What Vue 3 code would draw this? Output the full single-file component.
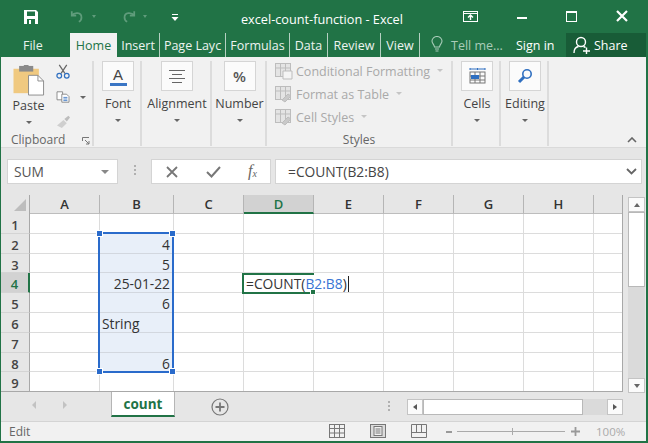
<script setup>
const tabs = [
  { label: 'Insert', width: 43 },
  { label: 'Page Layc', width: 66 },
  { label: 'Formulas', width: 64 },
  { label: 'Data', width: 38 },
  { label: 'Review', width: 53 },
  { label: 'View', width: 39 }
]
const columns = ['A', 'B', 'C', 'D', 'E', 'F', 'G', 'H', '']
const rows = [1, 2, 3, 4, 5, 6, 7, 8, 9]

// values in column B, by row number
const columnB = {
  2: '4',
  3: '5',
  4: '25-01-22',
  5: '6',
  6: 'String',
  8: '6'
}
const styleLinks = [
  { label: 'Conditional Formatting', icon: 'cond' },
  { label: 'Format as Table', icon: 'table' },
  { label: 'Cell Styles', icon: 'cell' }
]
</script>

<template>
  <div class="window">
    <header class="titlebar">
      <div class="quick">
        <svg class="save" width="16" height="16" viewBox="0 0 16 16">
          <path d="M1 1h12l2 2v12H1z" fill="#fff" />
          <rect x="4" y="2.5" width="8" height="4.5" fill="#217346" />
          <rect x="4" y="10" width="8" height="5" fill="#217346" />
          <rect x="6" y="11" width="2" height="4" fill="#fff" />
        </svg>
        <svg class="undo" width="15" height="13" viewBox="0 0 17 14" fill="none" stroke="#5f9c7b" stroke-width="2">
          <path d="M2 1v5h5M2 6c3-4 11-4 11 2 0 2-1 4-3 5" />
        </svg>
        <span class="mini-caret caret-undo"></span>
        <svg class="redo" width="15" height="13" viewBox="0 0 17 14" fill="none" stroke="#5f9c7b" stroke-width="2">
          <path d="M15 1v5h-5M15 6c-3-4-11-4-11 2 0 2 1 4 3 5" />
        </svg>
        <span class="mini-caret caret-redo"></span>
        <svg class="custom" width="8" height="8" viewBox="0 0 8 8">
          <path d="M1 1h6v1H1zM0.5 4h7L4 8z" fill="#fff" />
        </svg>
      </div>
      <div class="doc-title">excel-count-function - Excel</div>
      <div class="controls">
        <svg width="15" height="11" viewBox="0 0 15 11" fill="none" stroke="#fff">
          <rect x="0.5" y="0.5" width="14" height="10" />
          <path d="M0.5 2.5h14" />
          <path d="M7.5 9V4.5M5 6.5l2.5-2.5L10 6.5" stroke-width="1.4" />
        </svg>
        <span class="minimize"></span>
        <span class="maximize"></span>
        <svg width="12" height="12" viewBox="0 0 12 12" stroke="#fff" stroke-width="2.2">
          <path d="M1 1l10 10M11 1L1 11" />
        </svg>
      </div>
    </header>

    <nav class="tabbar">
      <span class="file-tab">File</span>
      <span class="home-tab">Home</span>
      <span v-for="tab in tabs" :key="tab.label" class="tab" :style="{ width: tab.width + 'px' }">{{ tab.label }}</span>
      <svg class="bulb" width="12" height="17" viewBox="0 0 12 17" fill="none" stroke="#a9ccb9" stroke-width="1.1">
        <path d="M3.5 11C3 8 1 7.500 1 5a5 4.500 0 0 1 10 0c0 2.500-2 3-2.500 6zM4 13h4M4.500 15h3" />
      </svg>
      <span class="tell">Tell me...</span>
      <span class="signin">Sign in</span>
      <span class="share">
        <svg width="18" height="18" viewBox="0 0 18 18" fill="none" stroke="#fff" stroke-width="1.4">
          <circle cx="8" cy="6" r="4.500" />
          <path d="M1 17c0-4 2-6 4.500-6.500M10.500 10.500c1 .3 1.500.6 2 1M10 15h7M13.500 11.500v7" />
        </svg>
        Share
      </span>
    </nav>

    <section class="ribbon">
      <div class="group clipboard">
        <div class="clip-main">
          <svg width="32" height="31" viewBox="0 0 33 33">
            <rect x="0" y="4" width="27" height="26" fill="#f0c980" />
            <rect x="6" y="1" width="15" height="6" fill="#8a8a8a" />
            <rect x="11" y="0" width="5" height="3" fill="#8a8a8a" />
            <path d="M16 11h10l6 6v15H16z" fill="#fff" stroke="#8a8a8a" />
            <path d="M26 11v6h6" fill="none" stroke="#8a8a8a" />
          </svg>
          <span class="label">Paste</span>
          <i class="caret"></i>
        </div>
        <div class="clip-tools">
          <svg width="16" height="15" viewBox="0 0 16 16" fill="none">
            <path d="M4 1l6 9M12 1l-6 9" stroke="#666" stroke-width="1.300" />
            <circle cx="4" cy="12.500" r="2.500" stroke="#2f6fc0" stroke-width="1.300" />
            <circle cx="12" cy="12.500" r="2.500" stroke="#2f6fc0" stroke-width="1.300" />
          </svg>
          <div class="copy-row">
            <svg width="16" height="12" viewBox="0 0 17 15" fill="#fff" stroke="#777">
              <path d="M1 1h7v10H1z" />
              <path d="M7 4h6l3 3v7H7z" />
              <path d="M9 8h5M9 10h5M9 12h5" stroke="#2f6fc0" />
            </svg>
            <i class="caret"></i>
          </div>
          <svg width="17" height="13" viewBox="0 0 18 16">
            <path d="M1 13l8-7 4 4-6 6z" fill="#cfcfcf" />
            <path d="M10 5l5-4 2 2-4 5z" fill="#bdbdbd" />
          </svg>
        </div>
        <div class="group-name clip-name">
          Clipboard
          <svg class="launcher" width="8" height="8" viewBox="0 0 8 8" fill="none" stroke="#777">
            <path d="M.5 4V.5H7M3 3l4 4M7 4v3H4" />
          </svg>
        </div>
      </div>

      <div class="group collapsed font">
        <div class="big-btn">
          <span class="font-a">A</span>
          <span class="font-bar"></span>
        </div>
        <span class="label">Font</span>
        <i class="caret"></i>
      </div>

      <div class="group collapsed alignment">
        <div class="big-btn">
          <svg width="16" height="13" viewBox="0 0 16 13" stroke="#666">
            <path d="M0 .5h16M3 4.500h10M0 8.500h16M3 12.500h10" />
          </svg>
        </div>
        <span class="label">Alignment</span>
        <i class="caret"></i>
      </div>

      <div class="group collapsed number">
        <div class="big-btn"><span class="percent">%</span></div>
        <span class="label">Number</span>
        <i class="caret"></i>
      </div>

      <div class="group styles">
        <div class="style-links">
          <div v-for="item in styleLinks" :key="item.label" class="style-link">
            <svg width="18" height="17" viewBox="0 0 18 17" fill="none" stroke="#bdbdbd">
              <rect x="0.5" y="0.5" width="15" height="13" fill="#e4e4e4" />
              <path d="M0.5 5h15M5.500 .5v13M10.500 .5v13" />
              <path v-if="item.icon === 'cond'" d="M8 8h9v8H8z" fill="#f4f4f4" />
              <path v-if="item.icon !== 'cond'" d="M7 14l6-6 3 2-6 6z" fill="#c9c9c9" />
            </svg>
            <span>{{ item.label }}</span>
            <i class="caret pale"></i>
          </div>
        </div>
        <div class="group-name">Styles</div>
      </div>

      <div class="group collapsed cells">
        <div class="big-btn">
          <svg width="17" height="16" viewBox="0 0 17 16" fill="none" stroke="#777">
            <path d="M1 1h15M1 0v2M16 0v2M8.500 0v2" stroke="#2f6fc0" />
            <rect x="1" y="4" width="15" height="11" />
            <path d="M1 8h15M1 12h15M6 4v11M11 4v11" />
            <rect x="2" y="7" width="8" height="4" fill="#2f6fc0" stroke="none" />
          </svg>
        </div>
        <span class="label">Cells</span>
        <i class="caret"></i>
      </div>

      <div class="group collapsed editing">
        <div class="big-btn">
          <svg width="16" height="16" viewBox="0 0 16 16" fill="none" stroke="#2f6fc0">
            <circle cx="10" cy="6" r="4.200" stroke-width="1.600" />
            <path d="M7 9l-5 5" stroke-width="3" />
          </svg>
        </div>
        <span class="label">Editing</span>
        <i class="caret"></i>
      </div>

      <svg class="collapse" width="10" height="6" viewBox="0 0 10 6" fill="none" stroke="#666" stroke-width="1.600">
        <path d="M1 5l4-4 4 4" />
      </svg>
    </section>

    <section class="formula-bar">
      <div class="name-box">
        <span>SUM</span>
        <i class="name-caret"></i>
      </div>
      <div class="dots"><i></i><i></i><i></i></div>
      <div class="fx-box">
        <svg width="13" height="12" viewBox="0 0 13 12" stroke="#777" stroke-width="1.800">
          <path d="M1 1l10 10M11 1L1 11" />
        </svg>
        <svg width="15" height="12" viewBox="0 0 15 12" fill="none" stroke="#777" stroke-width="2">
          <path d="M1 6l4.500 4.500L14 1" />
        </svg>
        <span class="fx">f<sub>x</sub></span>
      </div>
      <div class="formula-input">
        <span>=COUNT(B2:B8)</span>
        <svg width="11" height="7" viewBox="0 0 11 7" fill="none" stroke="#666" stroke-width="1.800">
          <path d="M1 1l4.500 4.500L10 1" />
        </svg>
      </div>
    </section>

    <section class="sheet-area">
      <div class="sheet">
        <div class="grid">
          <div class="corner"><i></i></div>
          <div
            v-for="col in columns"
            :key="col || 'rest'"
            class="col-head"
            :class="{ active: col === 'D', blank: !col }"
          >{{ col }}</div>
          <template v-for="row in rows" :key="row">
            <div class="row-head" :class="{ active: row === 4 }">{{ row }}</div>
            <div
              v-for="col in columns"
              :key="col || 'rest'"
              class="cell"
              :class="{ 'in-range': col === 'B' && row >= 2 && row <= 8, text: row === 6 }"
            >{{ col === 'B' ? columnB[row] : '' }}</div>
          </template>
        </div>
        <div class="range-box">
          <i class="handle tl"></i><i class="handle tr"></i><i class="handle bl"></i><i class="handle br"></i>
        </div>
        <div class="edit-box">=COUNT(<span class="ref">B2:B8</span>)<i class="cursor"></i><i class="edit-handle"></i></div>
      </div>
      <div class="vscroll">
        <div class="arrow-btn"><i class="up"></i></div>
        <div class="vthumb"></div>
        <div class="vtrack"></div>
        <div class="arrow-btn"><i class="down"></i></div>
      </div>
    </section>

    <section class="sheet-tabs">
      <span class="nav-arrow left"></span>
      <span class="nav-arrow right"></span>
      <span class="sheet-tab">count</span>
      <svg class="add" width="18" height="18" viewBox="0 0 18 18" fill="none" stroke="#777">
        <circle cx="9" cy="9" r="8" stroke-width="1.200" />
        <path d="M4.500 9h9M9 4.500v9" stroke-width="1.800" />
      </svg>
      <div class="splitter"><i></i><i></i><i></i></div>
      <div class="hscroll">
        <div class="h-btn"><i class="hleft"></i></div>
        <div class="hthumb"></div>
        <div class="htrack"></div>
        <div class="h-btn"><i class="hright"></i></div>
      </div>
    </section>

    <footer class="status">
      <span class="mode">Edit</span>
      <div class="views">
        <svg width="16" height="14" viewBox="0 0 16 14" fill="none" stroke="#777">
          <rect x="0.5" y="0.5" width="15" height="13" />
          <path d="M0.5 4.500h15M0.5 9h15M5.500 .5v13M10.500 .5v13" />
        </svg>
        <svg width="16" height="14" viewBox="0 0 16 14" fill="none" stroke="#777">
          <rect x="0.5" y="0.5" width="15" height="13" fill="#dcdcdc" />
          <rect x="4" y="2.500" width="8" height="9" fill="#f1f1f1" />
          <path d="M5.500 5h5M5.500 7h5M5.500 9h5" />
        </svg>
        <svg width="16" height="14" viewBox="0 0 16 14" fill="none" stroke="#777">
          <path d="M.5 .5h15v13H.5zM.5 8.500h15M5.500 .5v8M10.500 .5v8" />
        </svg>
      </div>
      <div class="zoom">
        <span class="zoom-minus"></span>
        <div class="zoom-line"><i></i></div>
        <svg width="9" height="9" viewBox="0 0 9 9" stroke="#999" stroke-width="1.800">
          <path d="M0 4.500h9M4.500 0v9" />
        </svg>
        <span class="zoom-value">100%</span>
      </div>
    </footer>
  </div>
</template>

<style>
html,
body {
  margin: 0;
  background: #fff;
}
</style>

<style scoped>
.window {
  width: 648px;
  height: 443px;
  box-sizing: border-box;
  border: solid #217346;
  border-width: 0 2px 2px 1px;
  background: #e6e6e6;
  display: flex;
  flex-direction: column;
  overflow: hidden;
  font-family: 'Open Sans', 'Noto Sans', sans-serif;
  color: #444;
}
i {
  display: block;
}

/* title bar */
.titlebar {
  height: 33px;
  flex: none;
  background: #217346;
  color: #fff;
  display: flex;
  align-items: center;
  position: relative;
  font-size: 12.700px;
}
.quick {
  width: 240px;
  display: flex;
  align-items: center;
  padding-left: 22px;
  box-sizing: border-box;
  flex: none;
}
.undo {
  margin-left: 31px;
}
.mini-caret {
  width: 0;
  height: 0;
  margin-left: 7px;
  border: 2.500px solid transparent;
  border-top: 3px solid #5f9c7b;
  border-bottom: 0;
}
.redo {
  margin-left: 25px;
}
.custom {
  margin-left: 24px;
}
.doc-title {
  margin-top: 5px;
  white-space: nowrap;
}
.controls {
  position: absolute;
  left: 462px;
  top: 10px;
  width: 165px;
  display: flex;
  align-items: center;
  justify-content: space-between;
}
.minimize {
  width: 10px;
  height: 2px;
  background: #fff;
  margin-top: 4px;
}
.maximize {
  width: 9px;
  height: 8px;
  border: 1.500px solid #fff;
  border-top-width: 2.500px;
}

/* tabs */
.tabbar {
  height: 24px;
  flex: none;
  background: #217346;
  color: #fff;
  display: flex;
  align-items: stretch;
  font-size: 12.500px;
  line-height: 25px;
  white-space: nowrap;
}
.file-tab {
  width: 69px;
  padding-left: 22px;
  box-sizing: border-box;
  color: #e9f2ed;
}
.home-tab {
  width: 47px;
  background: #f1f1f1;
  color: #217346;
  text-align: center;
}
.tab {
  box-sizing: border-box;
  text-align: center;
  overflow: hidden;
  padding: 0 3px;
  border-right: 1px solid #b5d0c1;
  color: #edf4f0;
}
.bulb {
  margin: 3px 0 0 11px;
}
.tell {
  margin-left: 8px;
  color: #a9ccb9;
  width: 65px;
}
.signin {
  width: 50px;
  color: #fff;
}
.share {
  margin-left: auto;
  width: 80px;
  background: #185c37;
  display: flex;
  align-items: center;
  gap: 3px;
  padding-left: 7px;
  box-sizing: border-box;
  color: #fff;
}

/* ribbon */
.ribbon {
  height: 91px;
  flex: none;
  background: #f1f1f1;
  border-bottom: 1px solid #dadada;
  box-sizing: border-box;
  display: flex;
  position: relative;
  font-size: 12.500px;
  padding: 4px 0 1px;
}
.group {
  box-sizing: border-box;
  border-right: 2px solid #dcdcdc;
  flex: none;
}
.collapsed {
  display: flex;
  flex-direction: column;
  align-items: center;
  padding-left: 2px;
  color: #444;
}
.big-btn {
  width: 32px;
  height: 30px;
  box-sizing: border-box;
  background: #fbfbfb;
  border: 1px solid #d5d5d5;
  display: flex;
  flex-direction: column;
  align-items: center;
  justify-content: center;
  flex: none;
}
.label {
  margin-top: 4px;
  line-height: 18px;
  white-space: nowrap;
}
.caret {
  width: 0;
  height: 0;
  margin-top: 6px;
  border: 3px solid transparent;
  border-top: 3px solid #666;
  border-bottom: 0;
}
.caret.pale {
  display: inline-block;
  border-top-color: #c5c5c5;
  margin: 0 0 2px 4px;
}
.clipboard {
  width: 93px;
  display: grid;
  grid-template-columns: 53px 40px;
  grid-template-rows: 1fr 12px;
}
.clip-main {
  display: flex;
  flex-direction: column;
  align-items: center;
  padding-left: 2px;
  padding-top: 4px;
}
.clip-main .label {
  margin-top: 1px;
}
.clip-main .caret {
  margin-top: 6px;
}
.clip-tools {
  display: flex;
  flex-direction: column;
  gap: 12px;
  padding: 3px 0 0 1px;
}
.copy-row {
  display: flex;
  align-items: center;
  gap: 9px;
}
.copy-row .caret {
  margin-top: 0;
}
.group-name {
  text-align: center;
  line-height: 12px;
  color: #666;
  font-size: 12px;
}
.clip-name {
  grid-column: 1 / 3;
  text-align: left;
  padding-left: 10px;
  position: relative;
}
.launcher {
  position: absolute;
  left: 81px;
  top: 3px;
}
.font {
  width: 48px;
}
.alignment {
  width: 70px;
}
.number {
  width: 55px;
}
.styles {
  width: 186px;
  display: flex;
  flex-direction: column;
  justify-content: space-between;
}
.style-links {
  display: flex;
  flex-direction: column;
  gap: 5px;
  color: #a9a9a9;
  padding: 1px 0 0 8px;
}
.style-link {
  display: flex;
  align-items: center;
  gap: 3px;
  height: 18px;
  white-space: nowrap;
}
.cells {
  width: 48px;
}
.editing {
  width: 48px;
}
.font-a {
  font-size: 15px;
  line-height: 15px;
  color: #444;
  font-family: 'Liberation Sans', sans-serif;
}
.font-bar {
  width: 17px;
  height: 3px;
  background: #3a75c4;
  margin-top: 1px;
}
.percent {
  font-size: 15px;
  font-weight: 600;
  color: #555;
}
.collapse {
  position: absolute;
  left: 626px;
  top: 80px;
}

/* formula bar */
.formula-bar {
  height: 47px;
  flex: none;
  display: flex;
  align-items: flex-start;
  padding: 11px 0 0 6px;
  box-sizing: border-box;
  font-size: 13.800px;
}
.name-box,
.fx-box,
.formula-input {
  height: 25px;
  background: #fff;
  border: 1px solid #d4d4d4;
  box-sizing: border-box;
  display: flex;
  align-items: center;
}
.name-box {
  width: 111px;
  justify-content: space-between;
  padding: 0 8px 0 6px;
  color: #555;
}
.name-caret {
  width: 0;
  height: 0;
  border: 4px solid transparent;
  border-top: 4px solid #888;
  border-bottom: 0;
}
.dots {
  width: 33px;
  display: flex;
  flex-direction: column;
  align-items: center;
  gap: 2px;
  padding-top: 6px;
}
.dots i {
  width: 2px;
  height: 2px;
  background: #b0b0b0;
}
.fx-box {
  width: 120px;
  padding: 0 13px 0 14px;
  justify-content: space-between;
}
.fx {
  font-family: 'Liberation Serif', serif;
  font-style: italic;
  color: #666;
  font-size: 16px;
  line-height: 14px;
}
.fx sub {
  font-size: 10px;
  vertical-align: baseline;
  position: relative;
  top: 1px;
}
.formula-input {
  width: 367px;
  margin-left: 4px;
  justify-content: space-between;
  padding: 0 4px 0 12px;
  color: #444;
}

/* sheet */
.sheet-area {
  flex: none;
  height: 197px;
  display: flex;
  align-items: flex-start;
}
.sheet {
  width: 622px;
  height: 197px;
  flex: none;
  position: relative;
  overflow: hidden;
  background: #fff;
  border-right: 1px solid #a8a8a8;
  border-bottom: 1px solid #a8a8a8;
  box-sizing: border-box;
}
.grid {
  display: grid;
  grid-template-columns: 29px 70px 74px 70px 70px 70px 70px 70px 70px 30px;
  grid-template-rows: 19px repeat(9, 19.800px);
  font-size: 13.800px;
}
.corner {
  background: #e6e6e6;
  border-right: 1px solid #a8a8a8;
  position: relative;
}
.corner i {
  position: absolute;
  right: 3px;
  bottom: 3px;
  border: 6px solid transparent;
  border-right-color: #bdbdbd;
  border-bottom-color: #bdbdbd;
}
.col-head {
  background: #e6e6e6;
  border-right: 1px solid #b5b5b5;
  border-bottom: 1px solid #bdbdbd;
  text-align: center;
  line-height: 19px;
  color: #333;
  font-weight: 600;
  font-size: 13px;
  box-sizing: border-box;
}
.col-head.blank {
  border-right: 0;
}
.col-head.active {
  background: #d2d2d2;
  color: #217346;
  border-bottom: 2px solid #217346;
}
.row-head {
  background: #e6e6e6;
  border-right: 1px solid #a8a8a8;
  border-bottom: 1px solid #d4d4d4;
  box-sizing: border-box;
  text-align: center;
  line-height: 22px;
  color: #444;
  font-weight: 600;
  font-size: 13px;
}
.row-head.active {
  background: #d2d2d2;
  color: #217346;
  border-right: 2px solid #217346;
}
.cell {
  border-right: 1px solid #dcdcdc;
  border-bottom: 1px solid #dcdcdc;
  box-sizing: border-box;
  text-align: right;
  padding-right: 3px;
  line-height: 22px;
  color: #333;
  white-space: nowrap;
}
.cell.in-range {
  background: #e8eff9;
  border-bottom-color: #d2d7df;
}
.cell.text {
  text-align: left;
  padding-left: 2px;
}
.range-box {
  position: absolute;
  left: 97px;
  top: 37px;
  width: 76px;
  height: 141px;
  box-sizing: border-box;
  border: 2px solid #2a6bcb;
}
.handle {
  position: absolute;
  width: 5px;
  height: 5px;
  background: #2a6bcb;
  border: 1px solid #fff;
}
.tl {
  left: -4px;
  top: -4px;
}
.tr {
  right: -4px;
  top: -4px;
}
.bl {
  left: -4px;
  bottom: -4px;
}
.br {
  right: -4px;
  bottom: -4px;
}
.edit-box {
  position: absolute;
  left: 241px;
  top: 78px;
  width: 72px;
  height: 21px;
  box-sizing: border-box;
  border: 2px solid #217346;
  border-right: 0;
  background: #fff;
  font-size: 13.800px;
  line-height: 17px;
  padding-left: 2px;
  color: #333;
  white-space: nowrap;
}
.ref {
  color: #3a75d4;
}
.cursor {
  display: inline-block;
  width: 1px;
  height: 16px;
  background: #222;
  margin-left: 1px;
  vertical-align: -3px;
}
.edit-handle {
  position: absolute;
  right: -2px;
  bottom: -3px;
  width: 4px;
  height: 4px;
  background: #217346;
  border: 1px solid #fff;
}

/* vertical scrollbar */
.vscroll {
  width: 17px;
  margin: 2px 0 0 5px;
  height: 196px;
  display: flex;
  flex-direction: column;
}
.arrow-btn {
  height: 15px;
  background: #fbfbfb;
  border: 1px solid #c4c4c4;
  box-sizing: border-box;
  display: flex;
  align-items: center;
  justify-content: center;
  flex: none;
}
.up {
  border: 3.500px solid transparent;
  border-bottom: 4px solid #666;
  border-top: 0;
}
.down {
  border: 3.500px solid transparent;
  border-top: 4px solid #666;
  border-bottom: 0;
}
.vthumb {
  height: 75px;
  background: #fff;
  border: 1px solid #b8b8b8;
  box-sizing: border-box;
  flex: none;
}
.vtrack {
  flex: 1;
  background: #dadada;
}

/* sheet tabs */
.sheet-tabs {
  height: 29px;
  flex: none;
  display: flex;
  align-items: flex-start;
  position: relative;
}
.nav-arrow {
  position: absolute;
  top: 9px;
  border: 4px solid transparent;
}
.nav-arrow.left {
  left: 31px;
  border-right-color: #c2c2c2;
  border-left: 0;
}
.nav-arrow.right {
  left: 62px;
  border-left-color: #c2c2c2;
  border-right: 0;
}
.sheet-tab {
  margin-left: 110px;
  width: 64px;
  height: 25px;
  background: #fff;
  border: solid #b5b5b5;
  border-width: 0 1px;
  border-bottom: 2px solid #217346;
  box-sizing: border-box;
  text-align: center;
  line-height: 24px;
  font-size: 13.500px;
  font-weight: 700;
  color: #217346;
}
.add {
  margin: 6px 0 0 36px;
}
.splitter {
  position: absolute;
  left: 387px;
  top: 9px;
  display: flex;
  flex-direction: column;
  gap: 2px;
}
.splitter i {
  width: 2px;
  height: 2px;
  background: #b0b0b0;
}
.hscroll {
  position: absolute;
  left: 406px;
  top: 7px;
  width: 216px;
  height: 16px;
  display: flex;
  background: #dadada;
}
.h-btn {
  width: 16px;
  background: #fbfbfb;
  border: 1px solid #c4c4c4;
  box-sizing: border-box;
  display: flex;
  align-items: center;
  justify-content: center;
  flex: none;
}
.hleft {
  border: 3.500px solid transparent;
  border-right: 4px solid #555;
  border-left: 0;
}
.hright {
  border: 3.500px solid transparent;
  border-left: 4px solid #555;
  border-right: 0;
}
.hthumb {
  width: 160px;
  background: #fff;
  border: 1px solid #b8b8b8;
  box-sizing: border-box;
}
.htrack {
  flex: 1;
}

/* status bar */
.status {
  flex: 1;
  background: #f1f1f1;
  border-top: 1px solid #d4d4d4;
  display: flex;
  align-items: center;
  font-size: 12px;
  position: relative;
  color: #666;
}
.mode {
  margin-left: 8px;
}
.views {
  position: absolute;
  left: 328px;
  top: 2px;
  display: flex;
  gap: 25px;
}
.zoom {
  position: absolute;
  left: 445px;
  top: 0;
  height: 100%;
  display: flex;
  align-items: center;
}
.zoom-minus {
  width: 6px;
  height: 2px;
  background: #999;
}
.zoom-line {
  width: 108px;
  height: 1px;
  background: #aaa;
  margin: 0 6px 0 5px;
  position: relative;
}
.zoom-line i {
  position: absolute;
  left: 55px;
  top: -3px;
  width: 1px;
  height: 7px;
  background: #aaa;
}
.zoom-value {
  margin-left: 16px;
  font-size: 11.500px;
  color: #aaa;
}
</style>
